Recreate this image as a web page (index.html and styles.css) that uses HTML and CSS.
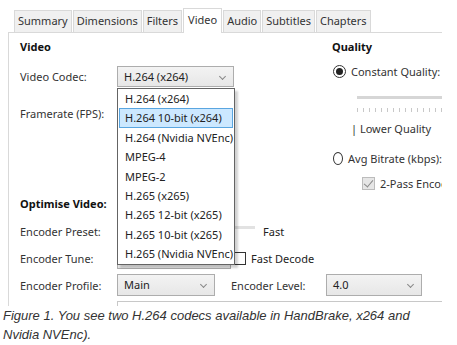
FILE: index.html
```html
<!DOCTYPE html>
<html lang="en">
<head>
    <meta charset="UTF-8">
    <title>HandBrake - Video</title>
    <link rel="stylesheet" href="styles.css">
</head>
<body>
    <div class="tabs">
        <div class="tab">Summary</div>
        <div class="tab">Dimensions</div>
        <div class="tab">Filters</div>
        <div class="tab active">Video</div>
        <div class="tab">Audio</div>
        <div class="tab">Subtitles</div>
        <div class="tab">Chapters</div>
    </div>

    <div class="panel">
        <div class="top">
            <div class="col-left">
                <div class="heading">Video</div>
                <div class="row codec-row">
                    <span class="label">Video Codec:</span>
                    <div class="select codec">H.264 (x264)<span class="chev"></span></div>
                </div>
                <div class="row fps-row">
                    <span class="label">Framerate (FPS):</span>
                </div>
            </div>
            <div class="col-right">
                <div class="heading">Quality</div>
                <div class="option first">
                    <span class="radio checked"></span>Constant Quality:
                </div>
                <div class="track"></div>
                <div class="ticks"></div>
                <div class="note">| Lower Quality</div>
                <div class="option">
                    <span class="radio"></span>Avg Bitrate (kbps):
                </div>
                <div class="option sub">
                    <span class="check on"></span>2-Pass Encoding
                </div>
            </div>
        </div>

        <div class="heading optimise">Optimise Video:</div>
        <div class="rows">
            <div class="row">
                <span class="label">Encoder Preset:</span>
                <div class="preset"><span class="preset-track"></span></div>
                <span class="fast">Fast</span>
            </div>
            <div class="row">
                <span class="label">Encoder Tune:</span>
                <div class="select tune"></div>
                <span class="check"></span>
                <span>Fast Decode</span>
            </div>
            <div class="row">
                <span class="label">Encoder Profile:</span>
                <div class="select profile">Main<span class="chev"></span></div>
                <span class="label level-label">Encoder Level:</span>
                <div class="select level">4.0<span class="chev"></span></div>
            </div>
            <div class="row">
                <span class="label"></span>
                <div class="extra"></div>
            </div>
        </div>

        <ul class="dropdown">
            <li>H.264 (x264)</li>
            <li class="hover">H.264 10-bit (x264)</li>
            <li>H.264 (Nvidia NVEnc)</li>
            <li>MPEG-4</li>
            <li>MPEG-2</li>
            <li>H.265 (x265)</li>
            <li>H.265 12-bit (x265)</li>
            <li>H.265 10-bit (x265)</li>
            <li>H.265 (Nvidia NVEnc)</li>
        </ul>
    </div>

    <p class="caption">Figure 1. You see two H.264 codecs available in HandBrake, x264 and Nvidia NVEnc).</p>
</body>
</html>
```

FILE: styles.css
```css
* {
    margin: 0;
    padding: 0;
    box-sizing: border-box;
}

body {
    background-color: #fff;
    color: #222;
    font-family: "Noto Sans", "Open Sans", sans-serif;
    font-size: 11px;
    width: 457px;
    height: 345px;
    overflow: hidden;
}

/* tab strip */
.tabs {
    display: flex;
    align-items: flex-end;
    height: 32px;
    padding-left: 14px;
}

.tab {
    height: 22px;
    line-height: 20px;
    padding: 0 3px;
    margin-right: 1px;
    background-color: #f0f0f0;
    border: 1px solid #d9d9d9;
    border-bottom: none;
    color: #333;
}

.tab.active {
    height: 25px;
    line-height: 21px;
    padding: 0 4px;
    background-color: #fff;
    position: relative;
    z-index: 2;
    margin-bottom: -1px;
}

/* panel */
.panel {
    position: relative;
    margin-left: 8px;
    width: 434px;
    height: 274px;
    border-left: 1px solid #d9d9d9;
    border-top: 1px solid #d9d9d9;
    padding-left: 11px;
    overflow: hidden;
}

.top {
    display: flex;
}

.col-left {
    width: 312px;
    flex-shrink: 0;
}

.heading {
    height: 20px;
    line-height: 20px;
    margin-top: 4px;
    font-weight: 700;
    color: #111;
}

.row {
    display: flex;
    align-items: center;
    height: 22px;
}

.label {
    width: 97px;
    flex-shrink: 0;
    color: #333;
}

.codec-row {
    margin-top: 9px;
    height: 21px;
}

.fps-row {
    margin-top: 16px;
    height: 20px;
}

/* combo boxes */
.select {
    position: relative;
    height: 22px;
    line-height: 19px;
    padding-left: 6px;
    background: linear-gradient(#f3f3f3, #e7e7e7);
    border: 1px solid #adadad;
    color: #222;
}

.select.codec {
    width: 117px;
    height: 21px;
}

.select.tune {
    width: 114px;
}

.select.profile {
    width: 98px;
}

.select.level {
    width: 96px;
}

.chev {
    position: absolute;
    right: 8px;
    top: 7px;
    width: 5px;
    height: 5px;
    border-right: 1px solid #888;
    border-bottom: 1px solid #888;
    transform: rotate(45deg);
}

/* quality column */
.col-right {
    flex: 1;
    min-width: 0;
}

.option {
    display: flex;
    align-items: center;
    height: 20px;
    margin-top: 9px;
    color: #333;
    white-space: nowrap;
}

.option.first {
    margin-top: 4px;
}

.option.sub {
    margin-top: 5px;
    padding-left: 30px;
}

.radio {
    position: relative;
    width: 13px;
    height: 13px;
    margin-left: 1px;
    margin-right: 5px;
    border: 1px solid #333;
    border-radius: 50%;
    background-color: #fff;
}

.radio.checked::after {
    content: "";
    position: absolute;
    left: 2px;
    top: 2px;
    width: 7px;
    height: 7px;
    border-radius: 50%;
    background-color: #222;
}

.track {
    margin-top: 15px;
    margin-left: 25px;
    height: 3px;
    background-color: #d6d6d6;
}

.ticks {
    margin-top: 9px;
    margin-left: 25px;
    height: 4px;
    background: repeating-linear-gradient(90deg, #c8c8c8 0 1px, transparent 1px 6px);
}

.note {
    height: 20px;
    line-height: 20px;
    margin-top: 7px;
    padding-left: 19px;
    color: #333;
}

.check {
    position: relative;
    width: 13px;
    height: 13px;
    margin-right: 5px;
    border: 1px solid #333;
    background-color: #fff;
    flex-shrink: 0;
}

.check.on {
    border-color: #bcbcbc;
    background-color: #e6e6e6;
}

.check.on::after {
    content: "";
    position: absolute;
    left: 3px;
    top: 0;
    width: 4px;
    height: 8px;
    border-right: 1.5px solid #8a8a8a;
    border-bottom: 1.5px solid #8a8a8a;
    transform: rotate(40deg);
}

/* optimise section */
.optimise {
    margin-top: 1px;
}

.rows {
    display: flex;
    flex-direction: column;
    gap: 5px;
    margin-top: 6px;
}

.preset {
    width: 138px;
    height: 22px;
    position: relative;
}

.preset-track {
    position: absolute;
    left: 0;
    right: 0;
    top: 6px;
    height: 3px;
    background-color: #e2e2e2;
}

.fast {
    margin-left: 8px;
}

.select.tune + .check {
    margin-left: 2px;
}

.level-label {
    margin-left: 16px;
    width: 95px;
}

.extra {
    flex: 1;
    height: 22px;
    border-top: 1px solid #c8c8c8;
    border-left: 1px solid #c8c8c8;
}

/* open list of the codec box */
.dropdown {
    position: absolute;
    left: 108px;
    top: 55px;
    width: 118px;
    list-style: none;
    padding: 0 1px;
    background-color: #fff;
    border: 1px solid #646464;
    box-shadow: 3px 3px 2px rgba(0, 0, 0, 0.18);
    z-index: 3;
}

.dropdown li {
    height: 19.4px;
    line-height: 17px;
    padding-left: 5px;
    border: 1px solid transparent;
    color: #222;
    white-space: nowrap;
}

.dropdown li.hover {
    background-color: #cce8ff;
    border-color: #5aa6e0;
}

/* figure caption */
.caption {
    margin-top: 0;
    padding-left: 3px;
    width: 420px;
    font-family: "Liberation Sans", Arial, sans-serif;
    font-style: italic;
    font-size: 13px;
    line-height: 19px;
    color: #333;
}
```
